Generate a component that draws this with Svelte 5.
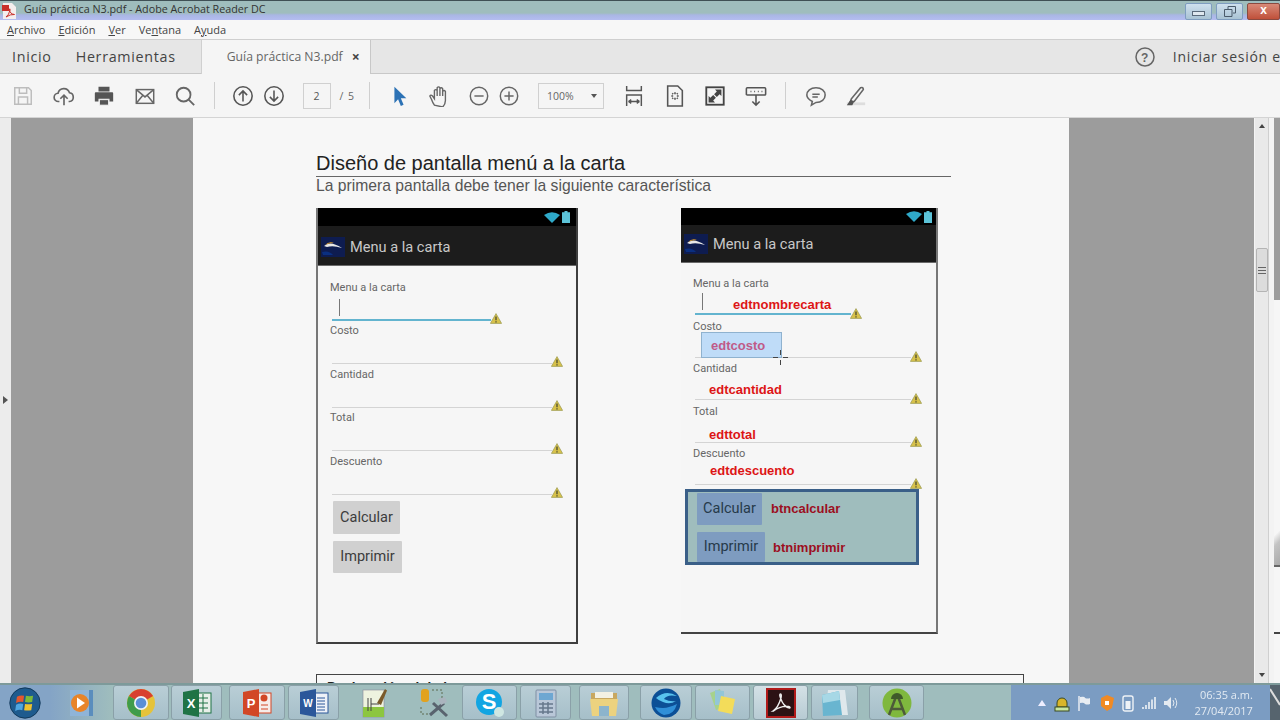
<script>
  const menus = [
    { pre: '', key: 'A', post: 'rchivo' },
    { pre: '', key: 'E', post: 'dición' },
    { pre: '', key: 'V', post: 'er' },
    { pre: 'Ve', key: 'n', post: 'tana' },
    { pre: 'A', key: 'y', post: 'uda' }
  ];

  const appFields = [
    { label: 'Menu a la carta', focus: true },
    { label: 'Costo' },
    { label: 'Cantidad' },
    { label: 'Total' },
    { label: 'Descuento' }
  ];

  const notedFields = [
    { label: 'Menu a la carta', focus: true, note: 'edtnombrecarta', cls: 'n1' },
    { label: 'Costo', note: 'edtcosto', selected: true },
    { label: 'Cantidad', note: 'edtcantidad', cls: 'n3' },
    { label: 'Total', note: 'edttotal', cls: 'n4' },
    { label: 'Descuento', note: 'edtdescuento', cls: 'n5' }
  ];

  // width and left gap of each taskbar slot, taken from the button spacing
  const taskItems = [
    { icon: 'media', w: 62, ml: 0 },
    { icon: 'chrome', w: 58, ml: 0, btn: true },
    { icon: 'excel', w: 53, ml: 0, btn: true },
    { icon: 'ppt', w: 58, ml: 5, btn: true },
    { icon: 'word', w: 53, ml: 1, btn: true },
    { icon: 'note', w: 66, ml: 0 },
    { icon: 'tools', w: 55, ml: 0 },
    { icon: 'skype', w: 57, ml: 0, btn: true },
    { icon: 'calc', w: 53, ml: 1, btn: true },
    { icon: 'folder', w: 52, ml: 6, btn: true },
    { icon: 'sphere', w: 54, ml: 9, btn: true },
    { icon: 'sticky', w: 57, ml: 1, btn: true },
    { icon: 'adobe', w: 57, ml: 1, btn: true, active: true },
    { icon: 'pad', w: 49, ml: 1, btn: true },
    { icon: 'android', w: 57, ml: 9, btn: true }
  ];
</script>

{#snippet warn()}
  <svg class="warn" viewBox="0 0 12 11">
    <path d="M6 .6 11.6 10.4H.4Z" fill="#d8c24a" stroke="#9a9a50" stroke-width=".7" />
    <path d="M6 3.6v3.6M6 8.2v1.2" stroke="#4a4a30" stroke-width="1.3" />
  </svg>
{/snippet}

{#snippet status()}
  <div class="statusbar">
    <svg width="16" height="11" viewBox="0 0 16 11">
      <path d="M8 11 0 3Q8-2.5 16 3Z" fill="#2fa9c9" />
    </svg>
    <svg width="8" height="12" viewBox="0 0 8 12">
      <path d="M2.5 0h3v1.2H8V12H0V1.2h2.5Z" fill="#5cc3d8" />
    </svg>
  </div>
{/snippet}

{#snippet appLogo()}
  <svg class="logo" viewBox="0 0 24 20">
    <rect width="24" height="20" fill="#0e1c50" />
    <path d="M3 9Q9 3 21 11Q12 8 6 10Z" fill="#e8e8e8" />
    <path d="M4 8Q8 4 13 6Q8 6 4 8Z" fill="#d99a2a" />
    <path d="M1 15Q8 13 12 18H2Z" fill="#0a2f80" />
  </svg>
{/snippet}

{#snippet taskIcon(name)}
  {#if name === 'media'}
    <svg viewBox="0 0 32 32"><rect x="5" y="3" width="23" height="26" fill="#8fb4d8" /><rect x="24" y="3" width="4" height="26" fill="#5a8dbd" /><circle cx="15" cy="16" r="9" fill="#e8842a" /><path d="M12 10.5 20 16l-8 5.500Z" fill="#fff" /></svg>
  {:else if name === 'chrome'}
    <svg viewBox="0 0 32 32"><circle cx="16" cy="16" r="14" fill="#e5c33a" /><path d="M16 16 3.900 9A14 14 0 0 1 28.100 9Z" fill="#d8402f" /><path d="M16 16 3.900 9A14 14 0 0 0 16 30Z" fill="#3f9c4a" /><circle cx="16" cy="16" r="7" fill="#eef3f6" /><circle cx="16" cy="16" r="5.300" fill="#5b8fd6" /></svg>
  {:else if name === 'excel'}
    <svg viewBox="0 0 32 32"><rect x="15" y="6" width="15" height="20" fill="#e8efe9" stroke="#1f7345" /><path d="M18 11h9M18 16h9M18 21h9M22 7v18" stroke="#1f7345" /><path d="M2 5 18 2v28L2 27Z" fill="#1f7345" /><text x="10" y="21" class="badge">X</text></svg>
  {:else if name === 'ppt'}
    <svg viewBox="0 0 32 32"><rect x="15" y="6" width="15" height="20" fill="#f7ece8" stroke="#d24726" /><path d="M20 18h7M20 22h7" stroke="#d24726" /><circle cx="23" cy="11" r="3.500" fill="#d24726" /><path d="M2 5 18 2v28L2 27Z" fill="#d24726" /><text x="10" y="21" class="badge">P</text></svg>
  {:else if name === 'word'}
    <svg viewBox="0 0 32 32"><rect x="15" y="6" width="15" height="20" fill="#eef1f8" stroke="#2b579a" /><path d="M19 11h8M19 14h8M19 17h8M19 20h8M19 23h8" stroke="#2b579a" /><path d="M2 5 18 2v28L2 27Z" fill="#2b579a" /><text x="10" y="20" class="badge small">W</text></svg>
  {:else if name === 'note'}
    <svg viewBox="0 0 32 32"><rect x="6" y="3" width="21" height="27" fill="#eef3df" stroke="#889" stroke-width=".6" /><rect x="6" y="20" width="21" height="10" fill="#8cc63f" /><path d="M11 11v13M14 11v13M14 17h8" stroke="#444" /><path d="M20 16 28 2l2 1.500L24 18Z" fill="#7a5a2a" /></svg>
  {:else if name === 'tools'}
    <svg viewBox="0 0 32 32"><rect x="3" y="2" width="8" height="13" rx="3" fill="#e2a21e" /><path d="M14 3h10v12M3 20v7h8" fill="none" stroke="#5c6a50" stroke-dasharray="2 2" /><path d="M12 28 26 16M15 16l14 13" stroke="#59636e" stroke-width="3" /><path d="M20 12l7-2 2 5-6 3Z" fill="#aab4be" /></svg>
  {:else if name === 'skype'}
    <svg viewBox="0 0 32 32"><circle cx="15" cy="15" r="13" fill="#12a5e2" /><circle cx="25" cy="25" r="5" fill="#cfe7e2" /><text x="15" y="22" class="badge large">S</text></svg>
  {:else if name === 'calc'}
    <svg viewBox="0 0 32 32"><rect x="6" y="3" width="20" height="27" rx="1" fill="#b9c7d8" stroke="#7f8fa3" /><rect x="9" y="6" width="14" height="7" fill="#6ea7d2" /><path d="M9 17h14M9 21h14M9 25h14M13 15v12M18 15v12" stroke="#66788c" stroke-width="1.500" /></svg>
  {:else if name === 'folder'}
    <svg viewBox="0 0 32 32"><path d="M3 6h26v8H3Z" fill="#c8a860" /><rect x="7" y="5" width="18" height="6" fill="#f3f1e3" /><path d="M2 12h28l-2 17H4Z" fill="#ecd27f" /><rect x="11" y="19" width="10" height="10" fill="#8cb4cc" /></svg>
  {:else if name === 'sphere'}
    <svg viewBox="0 0 32 32"><circle cx="16" cy="16" r="14.500" fill="#0c4f96" /><path d="M6 11Q16 2 27 9 17 7 14 12q6 3 12 2-6 4-13 1Q8 13 6 11Z" fill="#58c2ee" /><path d="M5 20q9 2 14 0 4-1 8-3-3 11-13 11Q8 26 5 20Z" fill="#2f8fd8" /></svg>
  {:else if name === 'sticky'}
    <svg viewBox="0 0 32 32"><path d="M3 6 13 2l5 18-9 3Z" fill="#a6d28c" /><path d="M8 3l9 1v14H8Z" fill="#93c6d8" /><path d="M14 9l14 3-3 15-14-3Z" fill="#f3dc5a" /></svg>
  {:else if name === 'adobe'}
    <svg viewBox="0 0 32 32"><rect x="2" y="2" width="28" height="28" fill="#2c1214" stroke="#b01a1a" stroke-width="2" /><path d="M8 24q5-3 8-13 .8-4-.5-4-1.500 0 0 4 3 9 9 10 1.500-.5-1-1.500-8-1-15 4.500Z" fill="none" stroke="#eee" stroke-width="1.400" /></svg>
  {:else if name === 'pad'}
    <svg viewBox="0 0 32 32"><path d="M9 3h17l3 25H6Z" fill="#dfe8ec" /><path d="M3 8 20 4l3 24-19 1Z" fill="#69b5d0" /><path d="M3 8 20 4l1 9-17 3Z" fill="#a7d8e6" /></svg>
  {:else if name === 'android'}
    <svg viewBox="0 0 32 32"><circle cx="16" cy="16" r="14.500" fill="#7fb83e" /><path d="M16 7 8 28M16 7l8 21M11 22h10" fill="none" stroke="#4d5a3a" stroke-width="2.500" /><path d="M10 12a6 6 0 0 1 12 0Z" fill="#3f5a2a" /></svg>
  {/if}
{/snippet}

<div class="window">
  <div class="titlebar">
    <svg class="pdf" viewBox="0 0 16 16">
      <path d="M1 0h9l4 4v12H1Z" fill="#f4eeee" />
      <path d="M0 2h7v6H0Z" fill="#c8302a" />
      <path d="M4 14q3-2 4-7 0-2-.5-1 0 5 5 5.500-4-.5-8.500 2.500Z" fill="none" stroke="#c8302a" />
    </svg>
    <span class="title">Guía práctica N3.pdf - Adobe Acrobat Reader DC</span>
    <div class="winbtns">
      <div class="winbtn"><i class="min"></i></div>
      <div class="winbtn">
        <svg width="12" height="11" viewBox="0 0 12 11"><path d="M4 3V.5h7.500V7H9M.5 3.500H8V10.500H.5Z" fill="none" stroke="#4a5a6a" /></svg>
      </div>
      <div class="winbtn close">x</div>
    </div>
  </div>

  <div class="menubar">
    {#each menus as m}
      <span>{m.pre}<u>{m.key}</u>{m.post}</span>
    {/each}
  </div>

  <div class="tabbar">
    <span class="navtab">Inicio</span>
    <span class="navtab">Herramientas</span>
    <div class="doctab">
      <span>Guía práctica N3.pdf</span>
      <b>×</b>
    </div>
    <div class="account">
      <svg width="20" height="20" viewBox="0 0 20 20">
        <circle cx="10" cy="10" r="9" fill="none" stroke="#666" stroke-width="1.500" />
        <text x="10" y="14.500" class="qmark">?</text>
      </svg>
      <span>Iniciar sesión en</span>
    </div>
  </div>

  <div class="toolbar">
    <div class="group first">
      <svg class="ti" viewBox="0 0 24 24" fill="none" stroke="#bdbdbd" stroke-width="1.600"><path d="M3 3h15l3 3v15H3Z" /><path d="M8 3v6h8V3M7 21v-8h10v8" /></svg>
      <svg class="ti" viewBox="0 0 24 24" fill="none" stroke="#666" stroke-width="1.800"><path d="M7 18H6a4.500 4.500 0 0 1-.5-9A6.500 6.500 0 0 1 18 8.500a4.800 4.800 0 0 1 0 9.500h-1" /><path d="M12 22V11M8 15l4-4 4 4" /></svg>
      <svg class="ti" viewBox="0 0 24 24"><path d="M6 2h12v5H6ZM3 8h18a1 1 0 0 1 1 1v9h-4v-3H6v3H2V9a1 1 0 0 1 1-1Z" fill="#555" /><path d="M7 16h10v6H7Z" fill="#555" stroke="#f5f5f5" /></svg>
      <svg class="ti" viewBox="0 0 24 24" fill="none" stroke="#666" stroke-width="1.600"><rect x="2.500" y="5" width="19" height="15" /><path d="M2.500 5 12 13l9.500-8M2.500 20l7-8.500M21.500 20l-7-8.500" /></svg>
      <svg class="ti" viewBox="0 0 24 24" fill="none" stroke="#666" stroke-width="2"><circle cx="10.500" cy="10.500" r="7.500" /><path d="M16 16l6 6" /></svg>
    </div>
    <i class="sep s1"></i>
    <div class="group nav">
      <svg class="ti" viewBox="0 0 24 24" fill="none" stroke="#555" stroke-width="1.700"><circle cx="12" cy="12" r="10" /><path d="M12 18V6.500M7.500 11 12 6.500l4.500 4.500" /></svg>
      <svg class="ti" viewBox="0 0 24 24" fill="none" stroke="#555" stroke-width="1.700"><circle cx="12" cy="12" r="10" /><path d="M12 6v11.500M7.500 13l4.500 4.500 4.500-4.500" /></svg>
    </div>
    <div class="pagebox">2</div>
    <span class="pagecount">/ 5</span>
    <i class="sep s2"></i>
    <div class="group tools">
      <svg class="ti" viewBox="0 0 24 24"><path d="M7 2 20 14.500h-6l3 7-3 1.300-3-7.300L7 20Z" fill="#2c72b5" /></svg>
      <svg class="ti" viewBox="0 0 24 24" fill="none" stroke="#666" stroke-width="1.500"><path d="M7 22q-2-3-3-6l-2-4q1-2 3 0l2 3V6q1.500-2 3 0v6-9q1.500-2 3 0v9-8q1.500-2 3 0v8-5q1.500-2 3 0v10q0 4-3 7Z" /></svg>
      <svg class="ti" viewBox="0 0 24 24" fill="none" stroke="#666" stroke-width="1.600"><circle cx="12" cy="12" r="9.500" /><path d="M7 12h10" /></svg>
      <svg class="ti" viewBox="0 0 24 24" fill="none" stroke="#666" stroke-width="1.600"><circle cx="12" cy="12" r="9.500" /><path d="M7 12h10M12 7v10" /></svg>
    </div>
    <div class="zoombox"><span>100%</span><i></i></div>
    <div class="group views">
      <svg class="ti" viewBox="0 0 24 24" fill="none" stroke="#555" stroke-width="1.600"><path d="M4 1v5h16V1M4 23V11h16v12M6 18h12M6 18l3-2M6 18l3 2M18 18l-3-2M18 18l-3 2" /></svg>
      <svg class="ti" viewBox="0 0 24 24" fill="none" stroke="#555" stroke-width="1.700"><path d="M4 1h11l5 5v17H4Z" /><path d="M12 8v2M12 14v2M8 12h2M14 12h2M9 9l1 1M15 9l-1 1M9 15l1-1M15 15l-1-1" /></svg>
      <svg class="ti" viewBox="0 0 24 24"><rect x="2.500" y="2.500" width="19" height="19" fill="none" stroke="#444" stroke-width="2" /><path d="M12 5h7v7l-2-2-3 3-3-3 3-3ZM12 19H5v-7l2 2 3-3 3 3-3 3Z" fill="#444" /></svg>
      <svg class="ti" viewBox="0 0 24 24" fill="none" stroke="#555" stroke-width="1.700"><rect x="1.500" y="3" width="21" height="8" rx="1" /><path d="M6 7h1M10 7h1M14 7h1M18 7h1M12 11v11M8 18l4 4 4-4" /></svg>
    </div>
    <i class="sep s3"></i>
    <div class="group notes">
      <svg class="ti" viewBox="0 0 24 24" fill="none" stroke="#666" stroke-width="1.700"><path d="M12 3c6 0 10 3.500 10 8s-4 8-10 8l-5 3 1-4c-3-1.500-6-4-6-7 0-4.500 4-8 10-8Z" /><path d="M8 10h8M8 13h6" /></svg>
      <svg class="ti" viewBox="0 0 24 24"><path d="M2 22h20v-3H2Z" fill="#ddd" /><path d="M7 15 17 3q3-1 3 2L10 18H6Z" fill="none" stroke="#666" stroke-width="1.700" /><path d="M2 22l4-6 4 2-2 4Z" fill="#555" /></svg>
    </div>
  </div>

  <div class="viewer">
    <div class="sidestrip"><i></i></div>
    <div class="canvas">
      <div class="page">
        <h1>Diseño de pantalla menú a la carta</h1>
        <p class="lead">La primera pantalla debe tener la siguiente característica</p>

        <div class="phones">
          <div class="phone plain">
            {@render status()}
            <div class="actionbar">
              {@render appLogo()}
              <span>Menu a la carta</span>
            </div>
            <div class="form">
              {#each appFields as f}
                <div class="field" class:focus={f.focus}>
                  <label>{f.label}</label>
                  <div class="row">
                    <div class="line">
                      {#if f.focus}<i class="caret"></i>{/if}
                    </div>
                    {@render warn()}
                  </div>
                </div>
              {/each}
              <div class="btn calc">Calcular</div>
              <div class="btn print">Imprimir</div>
            </div>
          </div>

          <div class="phone noted">
            {@render status()}
            <div class="actionbar">
              {@render appLogo()}
              <span>Menu a la carta</span>
            </div>
            <div class="form">
              {#each notedFields as f}
                <div class="field" class:focus={f.focus}>
                  <label>{f.label}</label>
                  <div class="row">
                    <div class="line">
                      {#if f.focus}<i class="caret"></i>{/if}
                      {#if f.selected}
                        <span class="picked">{f.note}</span>
                        <svg class="cross" width="15" height="15" viewBox="0 0 15 15"><path d="M7.500 0v5M7.500 10v5M0 7.500h5M10 7.500h5" stroke="#444" /></svg>
                      {:else}
                        <span class="note {f.cls}">{f.note}</span>
                      {/if}
                    </div>
                    {@render warn()}
                  </div>
                </div>
              {/each}
              <div class="buttons-box">
                <div class="box-row">
                  <div class="btn calc">Calcular</div>
                  <span>btncalcular</span>
                </div>
                <div class="box-row second">
                  <div class="btn print">Imprimir</div>
                  <span>btnimprimir</span>
                </div>
              </div>
            </div>
          </div>
        </div>

        <div class="next-block">Declaración global</div>
      </div>
    </div>
    <div class="scrollbar">
      <i class="arrow up"></i>
      <div class="thumb"><i></i><i></i><i></i></div>
      <i class="arrow down"></i>
    </div>
    <div class="gutter"></div>
    <div class="behind">
      <div class="behind-top"></div>
      <div class="behind-shade"></div>
      <div class="behind-rule"></div>
    </div>
  </div>

  <div class="taskbar">
    <div class="start">
      <svg width="34" height="34" viewBox="0 0 38 38">
        <circle cx="19" cy="19" r="17" fill="#1e5b8e" stroke="#0f3354" />
        <path d="M10 12q4-2 8-1l-1 7q-4-1-8 1Z" fill="#e4572e" />
        <path d="M20 11q4 1 8 0l-1 7q-4 1-8 0Z" fill="#7cbb3a" />
        <path d="M9 21q4-2 8-1l-1 7q-4-1-8 1Z" fill="#4fa6e0" />
        <path d="M19 20q4 1 8 0l-1 7q-4 1-8 0Z" fill="#f0c22e" />
      </svg>
    </div>
    {#each taskItems as t}
      <div class="slot" style="width: {t.w}px; margin-left: {t.ml}px">
        <div class="taskbtn" class:framed={t.btn} class:active={t.active}>
          {@render taskIcon(t.icon)}
        </div>
      </div>
    {/each}
    <div class="taskspace"></div>
    <div class="tray">
      <svg width="8" height="6" viewBox="0 0 8 6"><path d="M0 6 4 0l4 6Z" fill="#eef" /></svg>
      <svg width="16" height="18" viewBox="0 0 16 18"><path d="M3 9a5 5 0 0 1 10 0v4H3Z" fill="#d9b52a" stroke="#3c4a20" /><rect x="1" y="13" width="14" height="4" fill="#c8e6a0" stroke="#3c4a20" /></svg>
      <svg width="14" height="16" viewBox="0 0 14 16"><path d="M2 1v15" stroke="#e8edf2" stroke-width="1.500" /><path d="M3 2q5-1 5 1 3 1 5 0v6q-3 1-5 0-1-2-5-1Z" fill="#e8edf2" /></svg>
      <svg width="16" height="18" viewBox="0 0 16 18"><path d="M2 4 8 1l7 3-2 10-5 3-6-5Z" fill="#f08a24" /><rect x="6" y="7" width="4" height="4" fill="#fff" /></svg>
      <svg width="12" height="18" viewBox="0 0 12 18"><rect x="1" y="2" width="10" height="15" rx="2" fill="none" stroke="#eef2f6" stroke-width="1.400" /><rect x="3.500" y="7" width="5" height="8" fill="#eef2f6" /></svg>
      <svg width="14" height="14" viewBox="0 0 14 14"><path d="M1 13v-2M4 13V9M7 13V6M10 13V3.500M13 13V1" stroke="#eef2f6" stroke-width="1.600" /></svg>
      <svg width="16" height="16" viewBox="0 0 16 16"><path d="M1 6h3l4-4v12l-4-4H1Z" fill="#e4eaf0" /><path d="M10 5q2 3 0 6M12 3q3.500 5 0 10" fill="none" stroke="#e4eaf0" /></svg>
      <div class="clock"><span>06:35 a.m.</span><span>27/04/2017</span></div>
    </div>
    <div class="peek">
      <svg width="10" height="35" viewBox="0 0 10 35"><path d="M0 4 10 20" stroke="#ddd" stroke-width="2" /></svg>
    </div>
  </div>
</div>

<style>
  :global(body) {
    margin: 0;
    background: #f5f5f5;
  }

  .window {
    width: 1280px;
    height: 720px;
    display: flex;
    flex-direction: column;
    overflow: hidden;
    font-family: "Open Sans", "Liberation Sans", sans-serif;
    filter: blur(0.35px);
  }

  /* title + menu */
  .titlebar {
    height: 20px;
    box-sizing: border-box;
    display: flex;
    align-items: center;
    padding-left: 2px;
    border-top: 1px solid #3f5055;
    background: linear-gradient(#9fbdbd 0 12px, #a9b6e4 14px, #b4bdf0 100%);
    color: #333;
  }
  .pdf {
    width: 16px;
    height: 16px;
  }
  .title {
    margin-left: 6px;
    font-size: 10.75px;
    margin-top: -3px;
  }
  .winbtns {
    margin-left: auto;
    display: flex;
    gap: 4px;
    align-self: flex-start;
    margin-top: 2px;
  }
  .winbtn {
    width: 27px;
    height: 17px;
    box-sizing: border-box;
    border: 1px solid #7f9dc0;
    border-radius: 2px;
    background: linear-gradient(#cfe0ee, #a9c3d4);
    display: flex;
    align-items: center;
    justify-content: center;
  }
  .winbtn .min {
    width: 11px;
    height: 3px;
    background: #dfe8ef;
    border: 1px solid #5a6a7a;
    margin-top: 4px;
  }
  .winbtn.close {
    width: 33px;
    background: linear-gradient(#d88a78, #c0503a);
    border-color: #8a4a40;
    color: #fff;
    font: bold 12px "Liberation Sans", sans-serif;
    padding-bottom: 3px;
  }

  .menubar {
    height: 20px;
    display: flex;
    align-items: center;
    padding-left: 7px;
    gap: 13px;
    background: #f7f7f7;
    border-bottom: 1px solid #cfcfcf;
    font-size: 11px;
    color: #444;
    box-sizing: border-box;
  }

  /* tabs */
  .tabbar {
    height: 34px;
    display: flex;
    align-items: center;
    background: #e6e6e6;
    border-bottom: 1px solid #c8c8c8;
    box-sizing: border-box;
  }
  .navtab {
    font-size: 14.300px;
    letter-spacing: 0.7px;
    color: #444;
    margin-left: 12px;
    margin-right: 12px;
  }
  .doctab {
    height: 34px;
    width: 170px;
    margin-left: 13px;
    box-sizing: border-box;
    background: #f5f5f5;
    border-left: 1px solid #d0d0d0;
    border-right: 1px solid #c8c8c8;
    display: flex;
    align-items: center;
    padding-left: 25px;
    font-size: 12.200px;
    color: #666;
  }
  .doctab b {
    margin-left: 9px;
    color: #444;
    font-size: 14px;
  }
  .account {
    margin-left: auto;
    display: flex;
    align-items: center;
    gap: 18px;
    margin-right: -10px;
    font-size: 14px;
    letter-spacing: 0.7px;
    color: #444;
    white-space: nowrap;
  }
  .qmark {
    text-anchor: middle;
    font: bold 12px "Liberation Sans", sans-serif;
    fill: #666;
  }

  /* toolbar */
  .toolbar {
    height: 44px;
    box-sizing: border-box;
    display: flex;
    align-items: center;
    background: #f5f5f5;
    border-bottom: 1px solid #d4d4d4;
  }
  .group {
    display: flex;
    align-items: center;
  }
  .ti {
    width: 22px;
    height: 22px;
    flex: none;
  }
  .first {
    margin-left: 12px;
    gap: 18.500px;
  }
  .sep {
    width: 1px;
    height: 27px;
    background: #cfcfcf;
  }
  .s1 {
    margin-left: 18px;
  }
  .nav {
    margin-left: 17px;
    gap: 8.500px;
  }
  .pagebox {
    margin-left: 18px;
    width: 28px;
    height: 26px;
    box-sizing: border-box;
    border: 1px solid #d0d0d0;
    text-align: center;
    line-height: 24px;
    font-size: 10.5px;
    color: #555;
  }
  .pagecount {
    margin-left: 9px;
    font-size: 10.5px;
    color: #666;
    word-spacing: 2px;
  }
  .s2 {
    margin-left: 15px;
  }
  .tools {
    margin-left: 18px;
    gap: 18px;
  }
  .tools .ti:nth-child(4) {
    margin-left: -10px;
  }
  .zoombox {
    margin-left: 18px;
    width: 66px;
    height: 26px;
    box-sizing: border-box;
    border: 1px solid #d0d0d0;
    display: flex;
    align-items: center;
    padding: 0 6px 0 8px;
    font-size: 10.5px;
    color: #666;
  }
  .zoombox i {
    margin-left: auto;
    border: 3.500px solid transparent;
    border-top: 4px solid #555;
    border-bottom: 0;
  }
  .views {
    margin-left: 19px;
    gap: 18.500px;
  }
  .s3 {
    margin-left: 18px;
  }
  .notes {
    margin-left: 19px;
    gap: 18px;
  }

  /* document area */
  .viewer {
    height: 565px;
    display: flex;
  }
  .sidestrip {
    width: 11px;
    flex: none;
    background: #ececec;
    display: flex;
    align-items: center;
  }
  .sidestrip i {
    margin-left: 3px;
    margin-top: -2px;
    border: 4px solid transparent;
    border-left: 5px solid #555;
    border-right: 0;
  }
  .canvas {
    width: 1243px;
    flex: none;
    background: #9c9c9c;
    padding-left: 182px;
    box-sizing: border-box;
    overflow: hidden;
  }
  .page {
    width: 876px;
    height: 600px;
    box-sizing: border-box;
    background: #f7f7f7;
    padding: 34px 0 0 123px;
    font-family: "Liberation Sans", sans-serif;
  }
  h1 {
    margin: 0;
    width: 635px;
    font-size: 20px;
    line-height: 22px;
    padding-bottom: 2px;
    font-weight: normal;
    color: #222;
    border-bottom: 1px solid #666;
  }
  .lead {
    margin: 0;
    font-size: 15.700px;
    line-height: 18px;
    color: #555;
  }
  .phones {
    margin-top: 13px;
    display: flex;
    align-items: flex-start;
    gap: 103px;
  }

  .phone {
    box-sizing: border-box;
    background: #f6f6f6;
    font-family: Roboto, "Liberation Sans", sans-serif;
  }
  .phone.plain {
    width: 262px;
    height: 436px;
    border: 2px solid #3f3f3f;
    border-left-color: #777;
    border-top: 0;
  }
  .phone.noted {
    width: 257px;
    height: 426px;
    border-right: 2px solid #777;
    border-bottom: 2px solid #444;
  }
  .statusbar {
    height: 18px;
    background: #000;
    display: flex;
    align-items: center;
    justify-content: flex-end;
    gap: 2px;
    padding-right: 6px;
  }
  .noted .statusbar {
    height: 17px;
    padding-right: 4px;
  }
  .actionbar {
    height: 40px;
    box-sizing: border-box;
    background: #1c1c1c;
    border-bottom: 1px solid #6a6a6a;
    display: flex;
    align-items: center;
    padding: 2px 0 0 3px;
    gap: 5px;
    color: #c8c8c8;
    font-size: 14.600px;
  }
  .noted .actionbar {
    height: 38px;
    padding-top: 1px;
  }
  .logo {
    width: 24px;
    height: 20px;
  }

  .form {
    padding-top: 14px;
    padding-left: 12px;
  }
  .plain .form {
    padding-top: 15px;
  }
  .field {
    height: 43.400px;
  }
  .noted .field {
    height: 42.600px;
  }
  label {
    display: block;
    font-size: 11px;
    line-height: 14px;
    color: #666;
  }
  .row {
    height: 26px;
    width: 231px;
    margin-left: 2px;
    display: flex;
    align-items: flex-end;
  }
  .noted .row {
    height: 24px;
    width: 227px;
    margin-left: 2px;
  }
  .field.focus .row {
    width: 170px;
  }
  .noted .field.focus .row {
    width: 167px;
  }
  .line {
    flex: 1;
    height: 100%;
    box-sizing: border-box;
    border-bottom: 1px solid #d4d4d4;
    position: relative;
    display: flex;
    align-items: flex-end;
  }
  .focus .line {
    border-bottom: 2px solid #63b4cf;
  }
  .caret {
    position: absolute;
    left: 7px;
    bottom: 3px;
    width: 1px;
    height: 17px;
    background: #777;
  }
  .warn {
    width: 12px;
    height: 11px;
    flex: none;
    margin: 0 0 -3px -1px;
  }
  .noted .warn {
    margin-bottom: -4px;
  }
  .note {
    font: bold 13px "Liberation Sans", sans-serif;
    color: #dd1515;
    margin-bottom: 1px;
    white-space: nowrap;
  }
  .note.n1 {
    margin-left: 38px;
  }
  .note.n3 {
    margin-left: 14px;
    margin-bottom: 2px;
  }
  .note.n4 {
    margin-left: 14px;
    margin-bottom: 0;
  }
  .note.n5 {
    margin-left: 15px;
    margin-bottom: 6px;
  }
  .picked {
    margin-left: 6px;
    margin-bottom: -1px;
    width: 81px;
    height: 26px;
    box-sizing: border-box;
    background: #bfdcf8;
    border: 1px solid #8fb2cf;
    padding-left: 9px;
    font: bold 13px/26px "Liberation Sans", sans-serif;
    color: #c05a88;
  }
  .cross {
    position: absolute;
    left: 78px;
    top: 16px;
  }

  .btn {
    box-sizing: border-box;
    display: flex;
    align-items: center;
    justify-content: center;
    font-size: 14.500px;
    color: #3c3c3c;
    background: #d0d0d0;
    border-radius: 1px;
  }
  .plain .btn {
    margin-left: 3px;
  }
  .plain .calc {
    margin-top: 3px;
    width: 67px;
    height: 33px;
  }
  .plain .print {
    margin-top: 7px;
    width: 69px;
    height: 32px;
  }

  .buttons-box {
    box-sizing: border-box;
    margin: -1px 0 0 -8px;
    width: 234px;
    height: 76px;
    border: 3px solid #3a5f88;
    background: #9fbdbd;
    position: relative;
    padding: 1px 0 0 9px;
  }
  .box-row {
    display: flex;
    align-items: center;
  }
  .box-row.second {
    margin-top: 7px;
  }
  .box-row .btn {
    background: #7e9cc0;
    color: #263a4a;
  }
  .box-row .calc {
    width: 65px;
    height: 32px;
  }
  .box-row .print {
    width: 68px;
    height: 30px;
  }
  .box-row span {
    margin-left: 9px;
    font: bold 13px "Liberation Sans", sans-serif;
    color: #9c0f1f;
  }
  .box-row.second span {
    margin-left: 8px;
    margin-top: 2px;
  }

  .next-block {
    margin-top: 30px;
    width: 708px;
    height: 40px;
    box-sizing: border-box;
    border: 1px solid #444;
    padding: 4px 0 0 10px;
    font: bold 13.500px "Liberation Sans", sans-serif;
    color: #222;
  }

  /* scroll strip */
  .scrollbar {
    width: 14px;
    flex: none;
    background: #e9e9e9;
    border-left: 1px solid #f4f4f4;
    box-sizing: border-box;
    display: flex;
    flex-direction: column;
    align-items: center;
    position: relative;
  }
  .arrow {
    border: 3.500px solid transparent;
  }
  .arrow.up {
    margin-top: 6px;
    border-bottom: 4px solid #444;
    border-top: 0;
  }
  .arrow.down {
    margin-top: auto;
    margin-bottom: 6px;
    border-top: 4px solid #444;
    border-bottom: 0;
  }
  .thumb {
    position: absolute;
    top: 130px;
    left: 1px;
    width: 12px;
    height: 44px;
    box-sizing: border-box;
    border: 1px solid #b4b4b4;
    border-radius: 2px;
    background: #dcdcdc;
    display: flex;
    flex-direction: column;
    justify-content: center;
    align-items: center;
    gap: 2px;
  }
  .thumb i {
    width: 8px;
    height: 1px;
    background: #666;
  }
  .gutter {
    width: 6px;
    flex: none;
    background: #f3f3f3;
    border-left: 1px solid #cfcfcf;
    box-sizing: border-box;
  }
  .behind {
    flex: 1;
    background: #f6f6f6;
  }
  .behind-top {
    height: 182px;
    background: #9c9c9c;
  }
  .behind-shade {
    height: 38px;
    margin-top: 227px;
    background: linear-gradient(135deg, #f6f6f6 20%, #c4c4c4 45%, #aaa);
    border-bottom: 2px solid #666;
  }
  .behind-rule {
    height: 2px;
    margin-top: 65px;
    background: #444;
  }

  /* taskbar */
  .taskbar {
    height: 37px;
    display: flex;
    background: linear-gradient(90deg, #84a4c6 50px, #9fbdbd 112px);
    border-top: 2px solid #7d9a9a;
    box-sizing: border-box;
  }
  .start {
    width: 50px;
    flex: none;
    display: flex;
    align-items: center;
    justify-content: center;
  }
  .slot {
    flex: none;
    display: flex;
    padding: 0 1px;
    box-sizing: border-box;
  }
  .taskbtn {
    flex: 1;
    display: flex;
    align-items: center;
    justify-content: center;
  }
  .taskbtn svg {
    width: 32px;
    height: 32px;
  }
  .taskbtn.framed {
    border: 1px solid #8aa0a8;
    border-radius: 3px;
    background: linear-gradient(#b9ced6, #a6bfc9);
    box-sizing: border-box;
  }
  .taskbtn.active {
    background: linear-gradient(#d4e1e6, #b7cbd3);
  }
  .badge {
    text-anchor: middle;
    font: bold 13px "Liberation Sans", sans-serif;
    fill: #fff;
  }
  .badge.small {
    font-size: 10px;
  }
  .badge.large {
    font-size: 22px;
  }
  .taskspace {
    width: 86px;
    flex: none;
  }
  .tray {
    width: 259px;
    flex: none;
    background: #7b9cc2;
    display: flex;
    align-items: center;
    gap: 7.500px;
    padding-left: 27px;
    box-sizing: border-box;
  }
  .clock {
    margin-left: 8px;
    display: flex;
    flex-direction: column;
    align-items: flex-end;
    gap: 3px;
    font-size: 11px;
    line-height: 13px;
    color: #e2eaf2;
  }
  .peek {
    flex: 1;
    background: #56646e;
  }
</style>
